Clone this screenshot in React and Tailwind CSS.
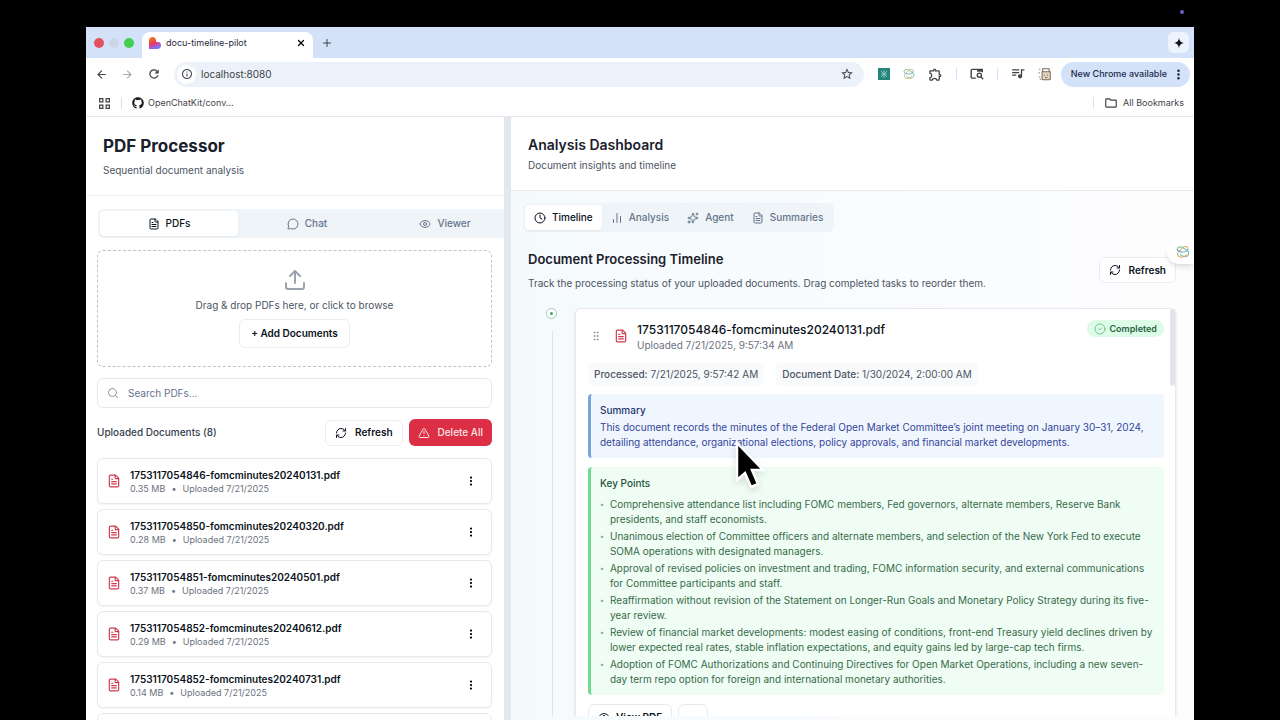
import React from "react";
import {
  ChartNoAxesColumn,
  CircleCheck,
  Clock,
  EllipsisVertical,
  Eye,
  FileText,
  GripVertical,
  MessageCircle,
  Plus,
  RefreshCw,
  Search,
  Sparkles,
  TriangleAlert,
  Upload,
  X,
} from "lucide-react";
import { FaGithub } from "react-icons/fa";
import {
  MdArrowBack,
  MdArrowForward,
  MdInfoOutline,
  MdMoreVert,
  MdOutlineExtension,
  MdOutlineFolder,
  MdRefresh,
  MdStarOutline,
} from "react-icons/md";

const documents = [
  { name: "1753117054846-fomcminutes20240131.pdf", size: "0.35 MB" },
  { name: "1753117054850-fomcminutes20240320.pdf", size: "0.28 MB" },
  { name: "1753117054851-fomcminutes20240501.pdf", size: "0.37 MB" },
  { name: "1753117054852-fomcminutes20240612.pdf", size: "0.29 MB" },
  { name: "1753117054852-fomcminutes20240731.pdf", size: "0.14 MB" },
];

const keyPoints = [
  "Comprehensive attendance list including FOMC members, Fed governors, alternate members, Reserve Bank presidents, and staff economists.",
  "Unanimous election of Committee officers and alternate members, and selection of the New York Fed to execute SOMA operations with designated managers.",
  "Approval of revised policies on investment and trading, FOMC information security, and external communications for Committee participants and staff.",
  "Reaffirmation without revision of the Statement on Longer-Run Goals and Monetary Policy Strategy during its five-year review.",
  "Review of financial market developments: modest easing of conditions, front-end Treasury yield declines driven by lower expected real rates, stable inflation expectations, and equity gains led by large-cap tech firms.",
  "Adoption of FOMC Authorizations and Continuing Directives for Open Market Operations, including a new seven-day term repo option for foreign and international monetary authorities.",
];

const HeartLogo = () => (
  <svg className="size-3" viewBox="0 0 24 24">
    <defs>
      <linearGradient id="heart" x1="0.2" y1="0" x2="0.6" y2="1">
        <stop offset="0.1" stopColor="#f2701f" />
        <stop offset="0.5" stopColor="#e8395c" />
        <stop offset="0.8" stopColor="#a35ce0" />
        <stop offset="1" stopColor="#6f7bf2" />
      </linearGradient>
    </defs>
    <path
      d="M7 0c4 0 7 3 7 7v3h4c4 0 6 3 6 7s-3 7-7 7H0V7c0-4 3-7 7-7z"
      fill="url(#heart)"
    />
  </svg>
);

const KnotIcon = ({ className }) => (
  <svg className={className} viewBox="0 0 24 24" fill="none" strokeWidth="1.8">
    <path d="M2 7c1-4 6-5 9-3l9 6c4 4 1 10-4 10-4 0-6-1-9-4" stroke="#62bd9c" />
    <path d="M21 6c-1-4-6-4-9-2l-8 8c-3 4 0 9 5 9s7-2 10-5" stroke="#d3ad62" />
    <path d="M2 7c1 5 5 5 10 5s8-1 9-6" stroke="#6aa9cf" />
  </svg>
);

const TabSearchIcon = () => (
  <svg className="size-[14px]" viewBox="0 0 24 24" fill="none" stroke="#3f4347" strokeWidth="2.4">
    <path d="M10 19H4a2 2 0 0 1-2-2V6a2 2 0 0 1 2-2h17v5" />
    <path d="M12 6h10" strokeWidth="4" />
    <circle cx="16" cy="14" r="3.5" />
    <path d="m18.5 16.5 4 4.5" />
  </svg>
);

const PlaylistIcon = () => (
  <svg className="size-[14px]" viewBox="0 0 24 24" fill="none" stroke="#3f4347" strokeWidth="2.2">
    <path d="M2 5h12M2 9.500h12M2 14h7" />
    <path d="M18 16V5h5" />
    <circle cx="15.5" cy="16" r="2.5" fill="#3f4347" />
  </svg>
);

const MugIcon = () => (
  <svg className="size-[14px]" viewBox="0 0 24 24" fill="none" stroke="#7a6757" strokeWidth="1.8">
    <path d="M7 8h14v12a2 2 0 0 1-2 2H9a2 2 0 0 1-2-2z" fill="#e9d8c6" />
    <path d="M8 8V3h11v5M11 13v2M16 13v2M12 18h4M2 4h2M2 9v2M2 17h2M3 21h2" />
  </svg>
);

const BrowserChrome = () => (
  <header className="bg-white text-[9px] text-[#3f4347]">
    <div className="flex h-[31px] items-end bg-[#d3e1f9] pr-[5px] pl-2">
      <div className="flex h-[31px] items-center gap-[5px] pr-2">
        <span className="size-[10px] rounded-full bg-[#e0535d]" />
        <span className="size-[10px] rounded-full bg-[#cdd6e6]" />
        <span className="size-[10px] rounded-full bg-[#3fd04f]" />
      </div>
      <div className="flex h-[26px] w-[171px] items-center rounded-t-lg bg-white px-[7px] pb-[5px]">
        <HeartLogo />
        <span className="ml-[5px] flex-1 text-[#1f2937]">docu-timeline-pilot</span>
        <button aria-label="Close tab">
          <X className="size-[10px] text-black" strokeWidth={3} />
        </button>
      </div>
      <button aria-label="New tab" className="ml-2 self-center">
        <Plus className="size-3" />
      </button>
      <button
        aria-label="Gemini"
        className="ml-auto flex size-[21px] items-center justify-center self-center rounded-md bg-[#edf3fd]"
      >
        <svg className="size-[10px]" viewBox="0 0 24 24" fill="#111">
          <path d="M12 0c1 7 5 11 12 12-7 1-11 5-12 12-1-7-5-11-12-12 7-1 11-5 12-12z" />
        </svg>
      </button>
    </div>

    <div className="flex h-8 items-center pr-1 pl-[9px]">
      <button aria-label="Back">
        <MdArrowBack className="size-[13px]" />
      </button>
      <button aria-label="Forward" className="ml-[13px]">
        <MdArrowForward className="size-[13px] text-[#a5a8ab]" />
      </button>
      <button aria-label="Reload" className="ml-[13px]">
        <MdRefresh className="size-[14px]" />
      </button>
      <div className="ml-[13px] flex h-[25px] flex-1 items-center rounded-full bg-[#ebf2f9] pr-[10px] pl-[3px]">
        <span className="flex size-[19px] items-center justify-center rounded-full bg-white">
          <MdInfoOutline className="size-3" />
        </span>
        <input
          aria-label="Address"
          defaultValue="localhost:8080"
          className="ml-[5px] min-w-0 flex-1 bg-transparent text-[10px] outline-none"
        />
        <MdStarOutline className="size-[14px]" />
      </div>
      <div className="ml-[14px] flex items-center gap-[13px]">
        <svg className="size-3" viewBox="0 0 12 12" fill="none" stroke="#9fd2c9" strokeWidth="0.8">
          <rect width="12" height="12" fill="#23857c" stroke="none" />
          <path d="M6 2v8M3 3l6 6M9 3l-6 6M3 6h6" />
        </svg>
        <KnotIcon className="size-3" />
        <MdOutlineExtension className="size-[15px]" />
        <span className="h-3 w-px bg-[#d3e1f9]" />
        <TabSearchIcon />
        <span className="h-3 w-px bg-[#d3e1f9]" />
        <PlaylistIcon />
        <MugIcon />
      </div>
      <button className="ml-[9px] flex h-[25px] items-center rounded-full bg-[#d3e1f9] pr-1 pl-[10px] font-medium text-[#1d2b4a]">
        New Chrome available
        <MdMoreVert className="ml-1 size-[15px]" />
      </button>
    </div>

    <div className="flex h-[27px] items-center border-b border-[#e3e8ec] pr-[10px] pl-3">
      <svg className="size-[13px]" viewBox="0 0 24 24" fill="none" stroke="currentColor" strokeWidth="2.2">
        <path d="M3 3h6v6H3zM15 3h6v6h-6zM3 15h6v6H3zM15 15h6v6h-6z" />
      </svg>
      <span className="ml-[10px] h-3 w-px bg-[#d9e2ec]" />
      <a href="#openchatkit" className="ml-[10px] flex items-center gap-1">
        <FaGithub className="size-3 text-[#1b1f23]" />
        OpenChatKit/conv...
      </a>
      <span className="ml-auto h-3 w-px bg-[#d9e2ec]" />
      <a href="#bookmarks" className="ml-[10px] flex items-center gap-[5px]">
        <MdOutlineFolder className="size-[14px]" />
        All Bookmarks
      </a>
    </div>
  </header>
);

const RefreshButton = () => (
  <button className="flex h-[26px] items-center gap-2 rounded-md border border-[#e9edf2] bg-white px-[9px] text-[10px] font-semibold text-[#0b1220]">
    <RefreshCw className="size-3" />
    Refresh
  </button>
);

const DocumentRow = ({ name, size }) => (
  <li className="flex h-[46px] shrink-0 items-center rounded-md border border-[#e6eaef] bg-white pr-[14px] pl-[9px] shadow-xs">
    <FileText className="size-[14px] text-[#cf3a50]" />
    <div className="ml-[9px] flex-1">
      <p className="text-[10px] leading-[15px] font-semibold text-[#0b1220]">{name}</p>
      <p className="flex gap-[6px] text-[9px] leading-3 text-[#6b7280]">
        <span>{size}</span>
        <span>•</span>
        <span>Uploaded 7/21/2025</span>
      </p>
    </div>
    <button aria-label={`Actions for ${name}`}>
      <EllipsisVertical className="size-3 text-black" strokeWidth={2.5} />
    </button>
  </li>
);

const ProcessorPanel = () => (
  <section className="flex w-[418px] shrink-0 flex-col overflow-hidden bg-white">
    <div className="border-b border-[#edf0f3] px-[17px] pt-[17px] pb-[17px]">
      <h1 className="text-[17px] leading-6 font-bold text-[#1a202c]">PDF Processor</h1>
      <p className="mt-1 text-[10px] leading-4 text-[#4b5563]">Sequential document analysis</p>
    </div>

    <div className="mt-[13px] -mr-3 ml-3 grid h-[29px] shrink-0 grid-cols-3 rounded-md bg-[#eff4f8] p-[2px] text-[10px] font-medium text-[#64748b]">
      <button className="flex items-center justify-center gap-[6px] rounded-sm bg-white text-[#0b1220] shadow-xs">
        <FileText className="size-3" />
        PDFs
      </button>
      <button className="flex items-center justify-center gap-[6px]">
        <MessageCircle className="size-3" />
        Chat
      </button>
      <button className="flex items-center justify-center gap-[6px]">
        <Eye className="size-3" />
        Viewer
      </button>
    </div>

    <div className="flex min-h-0 flex-1 flex-col pt-3 pr-3 pl-[11px]">
      <div className="flex h-[117px] shrink-0 flex-col items-center rounded-md border border-dashed border-[#bcc5cf] pt-[17px]">
        <Upload className="size-6 text-[#9ca3af]" />
        <p className="mt-[5px] text-[10px] leading-4 text-[#4b5563]">
          Drag &amp; drop PDFs here, or click to browse
        </p>
        <button className="mt-[6px] h-[29px] rounded-md border border-[#e9edf2] bg-white px-[11px] text-[10px] font-semibold text-[#0b1220]">
          + Add Documents
        </button>
      </div>

      <label className="mt-[11px] flex h-[30px] shrink-0 items-center gap-[9px] rounded-md border border-[#e6eaef] px-[9px]">
        <Search className="size-3 text-[#8b95a3]" />
        <input
          type="text"
          aria-label="Search PDFs"
          placeholder="Search PDFs..."
          className="min-w-0 flex-1 text-[10px] outline-none placeholder:text-[#64748b]"
        />
      </label>

      <div className="mt-[11px] flex items-center gap-[6px]">
        <h2 className="flex-1 text-[10px] font-medium text-[#374151]">Uploaded Documents (8)</h2>
        <RefreshButton />
        <button className="flex h-[27px] items-center gap-2 rounded-md bg-[#dc2f45] px-[9px] text-[10px] font-medium text-[#fbe3e6]">
          <TriangleAlert className="size-3" />
          Delete All
        </button>
      </div>

      <ul className="mt-3 flex flex-col gap-[5px]">
        {documents.map((doc) => (
          <DocumentRow key={doc.name} {...doc} />
        ))}
        {/* next row, still loading */}
        <li className="h-[46px] shrink-0 rounded-md border border-[#e6eaef] bg-white" />
      </ul>
    </div>
  </section>
);

const TimelineCard = () => (
  <article className="flex min-w-0 flex-1 rounded-t-md border border-b-0 border-[#e6eaef] bg-white shadow-sm">
    <div className="min-w-0 flex-1 pt-3 pr-[6px] pl-3">
      <div className="flex items-start">
        <GripVertical className="mt-[9px] ml-[2px] size-3 text-[#8b95a3]" />
        <FileText className="mt-2 ml-3 size-[14px] text-[#cf3a50]" />
        <div className="ml-[9px] flex-1">
          <h3 className="text-[12px] leading-[17px] font-medium text-[#0b1220]">
            1753117054846-fomcminutes20240131.pdf
          </h3>
          <p className="text-[10px] leading-[15px] text-[#6b7280]">Uploaded 7/21/2025, 9:57:34 AM</p>
        </div>
        <span className="-mt-px flex h-[17px] items-center gap-[3px] rounded-full bg-[#dcfce7] px-[7px] text-[9px] font-semibold text-[#2b6444]">
          <CircleCheck className="size-3 text-[#4fb477]" strokeWidth={1.5} />
          Completed
        </span>
      </div>

      <div className="mt-[10px] flex gap-3 text-[10px] leading-[15px] text-[#4b5563]">
        <p className="rounded-sm bg-[#f9fafb] px-[6px] py-1">
          <span className="font-medium">Processed:</span> 7/21/2025, 9:57:42 AM
        </p>
        <p className="rounded-sm bg-[#f9fafb] px-[6px] py-1">
          <span className="font-medium">Document Date:</span> 1/30/2024, 2:00:00 AM
        </p>
      </div>

      <section className="mt-2 rounded-sm border-l-[3px] border-[#71a5dc] bg-[#eff6fe] px-[9px] pt-[9px] pb-2">
        <h4 className="text-[10px] leading-[15px] font-medium text-[#27366e]">Summary</h4>
        <p className="mt-[2px] text-[10px] leading-[15px] text-[#35459b]">
          This document records the minutes of the Federal Open Market Committee’s joint meeting on
          January 30–31, 2024, detailing attendance, organizational elections, policy approvals, and
          financial market developments.
        </p>
      </section>

      <section className="mt-[9px] rounded-sm border-l-[3px] border-[#6fdc93] bg-[#f0fdf4] px-[9px] pt-[9px] pb-2">
        <h4 className="text-[10px] leading-[15px] font-medium text-[#25543a]">Key Points</h4>
        <ul className="mt-[6px] flex flex-col gap-[2px] text-[10px] leading-[15px] text-[#356b4b]">
          {keyPoints.map((point) => (
            <li key={point} className="flex gap-[6px]">
              <span className="text-[7px] text-[#77a78a]">•</span>
              <span>{point}</span>
            </li>
          ))}
        </ul>
      </section>

      <div className="mt-[9px] flex gap-[6px]">
        <button className="flex h-[26px] items-center gap-[6px] rounded-md border border-[#e6eaef] px-[9px] text-[10px] font-semibold text-[#0b1220]">
          <Eye className="size-3" />
          View PDF
        </button>
        <button aria-label="More actions" className="h-[26px] w-[30px] rounded-md border border-[#e6eaef]" />
      </div>
    </div>
    <div className="h-[77px] w-[5px] rounded-full bg-[#e2e6ec]" />
  </article>
);

const DashboardPanel = () => (
  <section className="relative flex min-w-0 flex-1 flex-col overflow-hidden bg-gradient-to-r from-[#f5fafd] to-[#fdfdfe]">
    <div className="border-b border-[#e6eaef] bg-white px-[17px] pt-[18px] pb-[17px]">
      <h2 className="text-[14px] leading-5 font-semibold text-[#1a202c]">Analysis Dashboard</h2>
      <p className="mt-[2px] text-[10px] leading-4 text-[#4b5563]">Document insights and timeline</p>
    </div>

    <div className="mt-3 ml-3 flex h-[29px] shrink-0 self-start rounded-md bg-[#eff4f8] p-[2px] text-[10px] font-medium text-[#64748b]">
      <button className="flex items-center gap-[6px] rounded-sm bg-white px-[9px] text-[#0b1220] shadow-xs">
        <Clock className="size-3" />
        Timeline
      </button>
      <button className="flex items-center gap-[6px] px-[9px]">
        <ChartNoAxesColumn className="size-3" />
        Analysis
      </button>
      <button className="flex items-center gap-[6px] px-[9px]">
        <Sparkles className="size-3" />
        Agent
      </button>
      <button className="flex items-center gap-[6px] px-[9px]">
        <FileText className="size-3" />
        Summaries
      </button>
    </div>

    <div className="flex items-center pt-[17px] pr-[18px] pl-[17px]">
      <div className="flex-1">
        <h2 className="text-[13px] leading-5 font-semibold text-[#1a202c]">Document Processing Timeline</h2>
        <p className="mt-[6px] text-[10px] leading-4 text-[#4b5563]">
          Track the processing status of your uploaded documents. Drag completed tasks to reorder them.
        </p>
      </div>
      <RefreshButton />
    </div>

    <div className="mt-[17px] mb-1 flex min-h-0 flex-1 overflow-hidden pr-[18px] pl-[35px]">
      <div className="flex w-[29px] shrink-0 flex-col">
        <span className="flex size-[11px] shrink-0 items-center justify-center rounded-full border border-[#9ccfb4] bg-white">
          <span className="size-[3px] rounded-full bg-[#3f9f6b]" />
        </span>
        <span className="mt-3 ml-[6px] w-px flex-1 bg-[#dde3e8]" />
      </div>
      <TimelineCard />
    </div>

    <button
      aria-label="Open assistant"
      className="absolute top-[123px] right-0 flex h-6 w-[27px] items-center justify-center rounded-l-full bg-white pl-1 shadow-md"
    >
      <KnotIcon className="size-[14px]" />
    </button>
  </section>
);

const App = () => {
  return (
    <div className="relative flex h-screen flex-col overflow-hidden bg-black px-[86px] pt-[27px] font-['Inter',sans-serif]">
      <span className="absolute top-[10px] right-[96px] size-1 rounded-full bg-[#6c5fc7]" />

      <BrowserChrome />
      <main className="flex min-h-0 flex-1 bg-white">
        <ProcessorPanel />
        <div className="w-[7px] shrink-0 bg-[#e3e8ee]" />
        <DashboardPanel />
      </main>

      {/* mouse pointer */}
      <svg
        className="pointer-events-none absolute top-[440px] left-[735px] h-[50px] w-8 drop-shadow-md"
        viewBox="0 0 32 50"
      >
        <path
          d="M2 3v37l8-7 6 14 7-3-6-14h11z"
          fill="#000"
          stroke="#fff"
          strokeWidth="2.5"
        />
      </svg>
    </div>
  );
};

export default App;
